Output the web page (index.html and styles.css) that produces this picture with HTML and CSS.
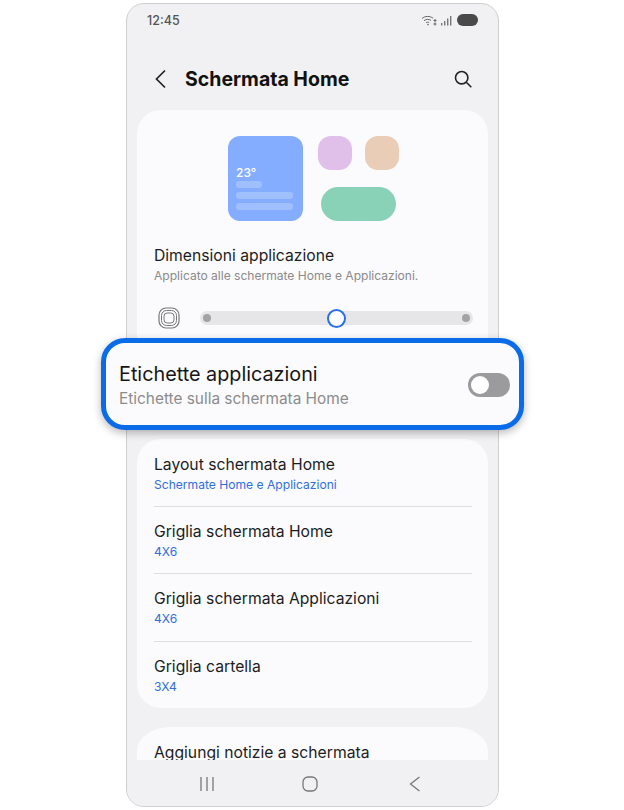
FILE: index.html
```html
<!DOCTYPE html>
<html lang="it">
<head>
    <meta charset="UTF-8">
    <title>Schermata Home</title>
    <link rel="stylesheet" href="styles.css">
</head>
<body>
    <div class="phone">
        <div class="status-bar">
            <span class="time">12:45</span>
            <div class="status-icons">
                <svg width="17" height="11" viewBox="0 0 17 11" fill="none" stroke="#666" stroke-width="1"><path d="M1 3.5C4 .8 9 .8 12 3.2"/><path d="M3 5.7C5 4 8 4 10 5.4"/><path d="M5 7.8C6 7 7.2 7 8.2 7.6"/><circle cx="7" cy="9.6" r=".8" fill="#666" stroke="none"/><path d="M12.5 5.5h3M14 4v3M12.5 9h3M14 7.5V10.5"/></svg>
                <svg width="13" height="11" viewBox="0 0 13 11" fill="#777"><rect x="1" y="8" width="1.4" height="2.5"/><rect x="4" y="6" width="1.4" height="4.5"/><rect x="7" y="3.5" width="1.4" height="7"/><rect x="10" y="1" width="1.4" height="9.5"/></svg>
                <span class="battery"></span>
            </div>
        </div>
        <div class="app-bar">
            <svg class="back" width="14" height="20" viewBox="0 0 14 20" fill="none" stroke="#222" stroke-width="1.7"><path d="M11 1.5 2.5 10 11 18.5"/></svg>
            <h1>Schermata Home</h1>
            <svg class="search" width="20" height="20" viewBox="0 0 20 20" fill="none" stroke="#222" stroke-width="1.6"><circle cx="8.7" cy="8.7" r="6.2"/><path d="m13.3 13.3 5 5"/></svg>
        </div>
        <div class="content">
            <div class="card card-size">
                <div class="preview">
                    <div class="widget">
                        <span class="temp">23°</span>
                        <span class="bar bar-short"></span>
                        <span class="bar"></span>
                        <span class="bar"></span>
                    </div>
                    <div class="preview-side">
                        <div class="icons-row">
                            <span class="app-icon pink"></span>
                            <span class="app-icon peach"></span>
                        </div>
                        <span class="pill"></span>
                    </div>
                </div>
                <div class="title">Dimensioni applicazione</div>
                <div class="subtitle">Applicato alle schermate Home e Applicazioni.</div>
                <div class="slider-row">
                    <svg width="22" height="22" viewBox="0 0 22 22" fill="none" stroke="#777"><rect x="1" y="1" width="20" height="20" rx="7" stroke-width="1.2"/><rect x="3.5" y="3.5" width="15" height="15" rx="5" stroke-width="1"/><rect x="6" y="6" width="10" height="10" rx="3.2" stroke-width="1"/></svg>
                    <div class="slider">
                        <span class="dot"></span>
                        <span class="thumb"></span>
                        <span class="dot"></span>
                    </div>
                </div>
            </div>
            <div class="card card-list">
                <div class="list-item">
                    <div class="title">Layout schermata Home</div>
                    <div class="value">Schermate Home e Applicazioni</div>
                </div>
                <div class="list-item">
                    <div class="title">Griglia schermata Home</div>
                    <div class="value">4X6</div>
                </div>
                <div class="list-item list-item-tall">
                    <div class="title">Griglia schermata Applicazioni</div>
                    <div class="value">4X6</div>
                </div>
                <div class="list-item">
                    <div class="title">Griglia cartella</div>
                    <div class="value">3X4</div>
                </div>
            </div>
            <div class="card card-news">
                <div class="title">Aggiungi notizie a schermata</div>
            </div>
        </div>
        <div class="nav-bar">
            <svg width="16" height="16" viewBox="0 0 16 16" stroke="#777" stroke-width="1.3"><path d="M2 1v14M8 1v14M14 1v14"/></svg>
            <svg width="16" height="16" viewBox="0 0 16 16" fill="none" stroke="#777" stroke-width="1.3"><rect x="1" y="1" width="14" height="14" rx="5"/></svg>
            <svg class="nav-back" width="12" height="16" viewBox="0 0 12 16" fill="none" stroke="#777" stroke-width="1.3"><path d="M10.5 1 1.5 8l9 7"/></svg>
        </div>
    </div>

    <div class="highlight">
        <div>
            <div class="highlight-title">Etichette applicazioni</div>
            <div class="highlight-sub">Etichette sulla schermata Home</div>
        </div>
        <span class="toggle"></span>
    </div>
</body>
</html>
```

FILE: styles.css
```css
body {
    font-family: Inter, "Liberation Sans", sans-serif;
    background-color: #ffffff;
    margin: 0;
    padding: 3px 0 0 126px;
    height: 807px;
    overflow: hidden;
    position: relative;
    color: #1c1c1c;
}

.phone {
    width: 371px;
    height: 802px;
    background-color: #f1f1f3;
    border: 1px solid #cfcfcf;
    border-radius: 18px;
    display: flex;
    flex-direction: column;
    overflow: hidden;
}

.status-bar {
    height: 30px;
    box-sizing: border-box;
    padding: 2px 20px 0;
    display: flex;
    justify-content: space-between;
    align-items: center;
    flex-shrink: 0;
}

.time {
    font-size: 12.5px;
    color: #555;
    font-weight: 500;
}

.status-icons {
    display: flex;
    align-items: center;
    gap: 2px;
}

.battery {
    width: 21px;
    height: 12px;
    border-radius: 6px;
    background-color: #4a4a4a;
    margin-left: 2px;
}

.app-bar {
    height: 76px;
    box-sizing: border-box;
    padding: 14px 25px 0 27px;
    display: flex;
    align-items: center;
    flex-shrink: 0;
}

.app-bar h1 {
    margin: 0 0 0 17px;
    font-size: 19.5px;
    font-weight: 700;
    color: #111;
    flex: 1;
}

.content {
    flex: 1;
    min-height: 0;
    overflow: hidden;
    padding: 0 10px;
}

.card {
    background-color: #fbfbfe;
    border-radius: 24px;
}

.card-size {
    height: 320px;
    margin-bottom: 9px;
    padding: 26px 15px 0 17px;
    box-sizing: border-box;
}

.preview {
    display: flex;
    justify-content: center;
    gap: 15px;
    margin-bottom: 25px;
    padding-right: 1px;
}

.widget {
    width: 75px;
    height: 85px;
    box-sizing: border-box;
    padding: 30px 10px 0 8px;
    background-color: #85adff;
    border-radius: 12px;
    display: flex;
    flex-direction: column;
}

.temp {
    color: #ffffff;
    font-size: 12px;
    font-weight: 500;
    line-height: 14px;
}

.bar {
    height: 7px;
    border-radius: 3px;
    background-color: #a0bfff;
    margin-top: 4px;
}

.bar-short {
    width: 26px;
    margin-top: 1px;
}

.preview-side {
    width: 80px;
    display: flex;
    flex-direction: column;
    align-items: center;
    gap: 17px;
}

.icons-row {
    display: flex;
    gap: 13px;
}

.app-icon {
    width: 34px;
    height: 34px;
    border-radius: 13px;
}

.pink {
    background-color: #e0bfe9;
}

.peach {
    background-color: #e9cdb7;
}

.pill {
    width: 75px;
    height: 34px;
    border-radius: 17px;
    background-color: #89d1b7;
}

.title {
    font-size: 15.7px;
    line-height: 20px;
    color: #1c1c1c;
}

.subtitle {
    font-size: 12.05px;
    line-height: 16px;
    color: #8a8a8a;
    margin-top: 2px;
}

.slider-row {
    display: flex;
    align-items: center;
    gap: 20px;
    margin-top: 23px;
    padding-left: 4px;
}

.slider {
    flex: 1;
    height: 14px;
    border-radius: 7px;
    background-color: #e6e6e9;
    display: flex;
    justify-content: space-between;
    align-items: center;
    padding: 0 3px;
}

.dot {
    width: 8px;
    height: 8px;
    border-radius: 50%;
    background-color: #a3a3a3;
}

.thumb {
    width: 15px;
    height: 15px;
    border: 2px solid #2a6fe8;
    border-radius: 50%;
    background-color: #ffffff;
}

.card-list {
    height: 269px;
    padding: 1px 16px 0 17px;
    box-sizing: border-box;
}

.list-item {
    height: 67px;
    box-sizing: border-box;
    padding-top: 15px;
    border-bottom: 1px solid #dfdfe2;
}

.list-item-tall {
    height: 68px;
}

.list-item:last-child {
    border-bottom: none;
}

.value {
    font-size: 12.1px;
    line-height: 16px;
    color: #2f6fdc;
    margin-top: 2px;
}

.card-news {
    margin-top: 19px;
    height: 80px;
    padding: 16px 16px 0 17px;
    box-sizing: border-box;
    border-radius: 34px / 24px;
}

.nav-bar {
    height: 46px;
    flex-shrink: 0;
    background-color: #f1f1f3;
    display: flex;
    align-items: center;
    gap: 87px;
    padding: 1px 0 0 72px;
    box-sizing: border-box;
}

.nav-back {
    margin-left: 4px;
}

.highlight {
    position: absolute;
    left: 101px;
    top: 338px;
    width: 423px;
    height: 92px;
    box-sizing: border-box;
    padding: 2px 9px 0 13px;
    border: 5px solid #0a6ce8;
    border-radius: 24px;
    background-color: #fbfbfe;
    box-shadow: 0 3px 8px rgba(0, 0, 0, 0.28);
    display: flex;
    justify-content: space-between;
    align-items: center;
}

.highlight-title {
    font-size: 19.8px;
    line-height: 24px;
    color: #151515;
}

.highlight-sub {
    font-size: 15.4px;
    line-height: 20px;
    color: #8c8c8c;
    margin-top: 3px;
}

.toggle {
    width: 42px;
    height: 24px;
    box-sizing: border-box;
    border-radius: 12px;
    background-color: #9b9b9e;
    display: flex;
    align-items: center;
    padding-left: 3px;
}

.toggle::before {
    content: "";
    width: 18px;
    height: 18px;
    border-radius: 50%;
    background-color: #ffffff;
}
```
